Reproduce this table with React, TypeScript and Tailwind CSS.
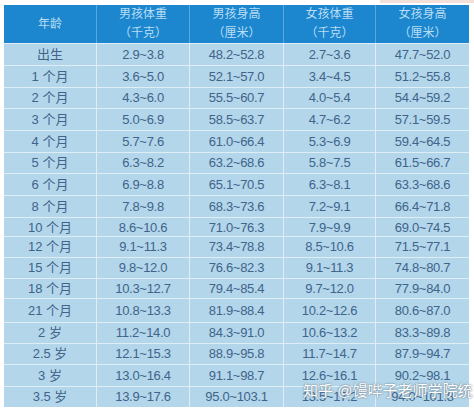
import React from "react";

type Row = { age: string; h: string; cells: [string, string, string, string] };

const ROWS: Row[] = [
  { age: "出生", h: "h-[22px]", cells: ["2.9~3.8", "48.2~52.8", "2.7~3.6", "47.7~52.0"] },
  { age: "1 个月", h: "h-[22px]", cells: ["3.6~5.0", "52.1~57.0", "3.4~4.5", "51.2~55.8"] },
  { age: "2 个月", h: "h-[21px]", cells: ["4.3~6.0", "55.5~60.7", "4.0~5.4", "54.4~59.2"] },
  { age: "3 个月", h: "h-[22px]", cells: ["5.0~6.9", "58.5~63.7", "4.7~6.2", "57.1~59.5"] },
  { age: "4 个月", h: "h-[22px]", cells: ["5.7~7.6", "61.0~66.4", "5.3~6.9", "59.4~64.5"] },
  { age: "5 个月", h: "h-[21px]", cells: ["6.3~8.2", "63.2~68.6", "5.8~7.5", "61.5~66.7"] },
  { age: "6 个月", h: "h-[22px]", cells: ["6.9~8.8", "65.1~70.5", "6.3~8.1", "63.3~68.6"] },
  { age: "8 个月", h: "h-[22px]", cells: ["7.8~9.8", "68.3~73.6", "7.2~9.1", "66.4~71.8"] },
  { age: "10 个月", h: "h-[19px]", cells: ["8.6~10.6", "71.0~76.3", "7.9~9.9", "69.0~74.5"] },
  { age: "12 个月", h: "h-[21px]", cells: ["9.1~11.3", "73.4~78.8", "8.5~10.6", "71.5~77.1"] },
  { age: "15 个月", h: "h-[21px]", cells: ["9.8~12.0", "76.6~82.3", "9.1~11.3", "74.8~80.7"] },
  { age: "18 个月", h: "h-[20px]", cells: ["10.3~12.7", "79.4~85.4", "9.7~12.0", "77.9~84.0"] },
  { age: "21 个月", h: "h-[24px]", cells: ["10.8~13.3", "81.9~88.4", "10.2~12.6", "80.6~87.0"] },
  { age: "2 岁", h: "h-[21px]", cells: ["11.2~14.0", "84.3~91.0", "10.6~13.2", "83.3~89.8"] },
  { age: "2.5 岁", h: "h-[21px]", cells: ["12.1~15.3", "88.9~95.8", "11.7~14.7", "87.9~94.7"] },
  { age: "3 岁", h: "h-[22px]", cells: ["13.0~16.4", "91.1~98.7", "12.6~16.1", "90.2~98.1"] },
  { age: "3.5 岁", h: "h-[21px]", cells: ["13.9~17.6", "95.0~103.1", "13.5~17.2", "94.0~101.8"] },
];

const HEADERS = [
  ["男孩体重", "（千克）"],
  ["男孩身高", "（厘米）"],
  ["女孩体重", "（千克）"],
  ["女孩身高", "（厘米）"],
];

const COLS = "grid grid-cols-[93px_93px_94px_92px_93px]";

export default function App() {
  return (
    <div
      className="relative w-[474px] h-[410px] overflow-hidden bg-white"
      style={{ fontFamily: '"Liberation Sans", "Noto Sans CJK SC", sans-serif' }}
    >
      <div className="flex h-[5px] justify-end">
        <div className="h-[3px] w-[94px] bg-[#f4e0da]" />
      </div>

      <div className="ml-[4px] w-[465px]">
        <div className={`${COLS} h-[38px] bg-[#1c87cf] text-[12px] text-[#b9ddf3]`}>
          <div className="flex items-center justify-center border-r border-[#5aa8dc]">年龄</div>
          {HEADERS.map(([a, b], i) => (
            <div
              key={a + i}
              className={`flex flex-col items-center justify-center leading-[19px] ${
                i < 3 ? "border-r border-[#5aa8dc]" : ""
              }`}
            >
              <span>{a}</span>
              <span>{b}</span>
            </div>
          ))}
        </div>

        {ROWS.map((r) => (
          <div
            key={r.age}
            className={`${COLS} ${r.h} border-t border-[#deedf6] bg-[#b3d6ea] text-[13px] text-[#40648a]`}
          >
            <div className="flex items-center justify-center border-r border-[#deedf6]">{r.age}</div>
            {r.cells.map((c, i) => (
              <div
                key={i}
                className={`flex items-center justify-center tracking-[-0.3px] ${
                  i < 3 ? "border-r border-[#deedf6]" : ""
                }`}
              >
                {c}
              </div>
            ))}
          </div>
        ))}
      </div>

      <div
        className="absolute left-[303px] top-[382px] text-[15px] leading-[18px] text-white"
        style={{ textShadow: "0 0 2px #6b7f90, 0 0 1px #6b7f90" }}
      >
        知乎 @馒哔子老师学院统
      </div>
    </div>
  );
}
